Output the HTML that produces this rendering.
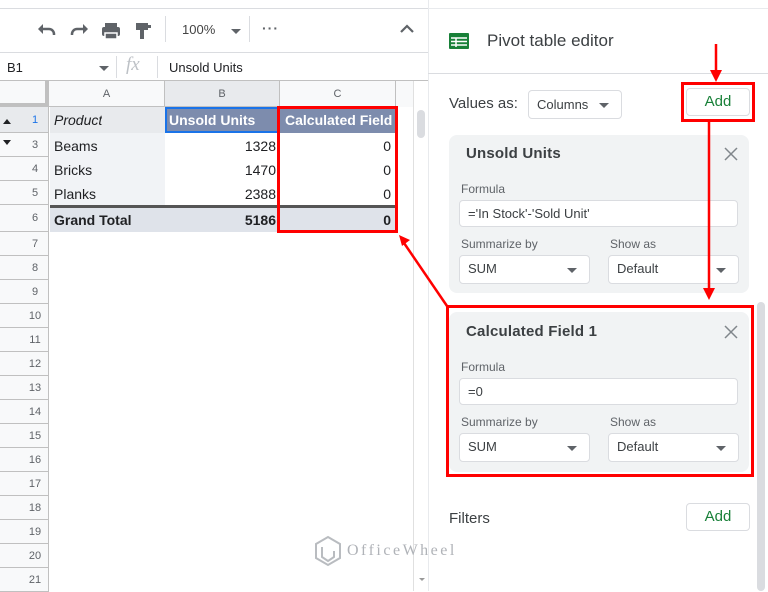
<!DOCTYPE html>
<html><head><meta charset="utf-8"><style>
*{box-sizing:border-box;margin:0;padding:0}
body{width:768px;height:591px;overflow:hidden;background:#fff;font-family:"Liberation Sans",Arial,sans-serif;position:relative;color:#202124}
.a{position:absolute}
.rh{position:absolute;left:0;width:49px;background:#f8f9fa;border-bottom:1px solid #c0c0c0;border-right:1px solid #c0c0c0;text-align:center;font-size:11px;color:#5f6368;padding-left:22px}
.cell{position:absolute;font-size:14px;line-height:24px;white-space:nowrap;overflow:hidden}
.card{position:absolute;background:#f1f3f4;border-radius:8px}
.lbl{position:absolute;font-size:12px;color:#5f6368}
.inp{position:absolute;background:#fff;border:1px solid #dadce0;border-radius:4px;font-size:13px;color:#3c4043;padding-left:8px;line-height:26px}
.dd::after{content:"";position:absolute;right:12px;top:12px;border-left:5px solid transparent;border-right:5px solid transparent;border-top:5px solid #5f6368}
.btn{position:absolute;border:1px solid #dadce0;border-radius:4px;background:#fff;color:#188038;font-size:15px;text-align:center}
.ttl{position:absolute;font-size:15px;color:#3c4043;font-weight:bold;letter-spacing:0.2px}
</style></head><body>
<div class="a" style="left:0;top:8px;width:428px;height:1px;background:#dadce0"></div>
<svg class="a" style="left:36px;top:20px" width="130" height="22" viewBox="0 0 130 22">
<path d="M4 9h9a5 5 0 0 1 5 5v1" fill="none" stroke="#5f6368" stroke-width="2.5"/><path d="M2 9l5-5v10z" fill="#5f6368"/>
<path d="M50 9h-9a5 5 0 0 0-5 5v1" fill="none" stroke="#5f6368" stroke-width="2.5"/><path d="M52 9l-5-5v10z" fill="#5f6368"/>
<rect x="66" y="7" width="18" height="9" rx="2" fill="#5f6368"/><rect x="69" y="3" width="12" height="4" fill="#5f6368"/><rect x="69" y="13" width="12" height="6" fill="#5f6368" stroke="#fff" stroke-width="1.5"/>
<rect x="100" y="3" width="12" height="7" fill="#5f6368"/><rect x="112" y="5" width="3" height="3" fill="#5f6368"/><rect x="104" y="10" width="4" height="9" fill="#5f6368"/>
</svg>
<div class="a" style="left:165px;top:16px;width:1px;height:26px;background:#dadce0"></div>
<div class="a" style="left:182px;top:22px;font-size:13px;color:#444">100%</div>
<div class="a" style="left:231px;top:29px;border-left:5px solid transparent;border-right:5px solid transparent;border-top:5px solid #5f6368"></div>
<div class="a" style="left:249px;top:16px;width:1px;height:26px;background:#dadce0"></div>
<div class="a" style="left:262px;top:20px;font-size:14px;color:#5f6368;letter-spacing:1px;font-weight:bold">···</div>
<svg class="a" style="left:399px;top:24px" width="16" height="10"><path d="M2 8l6-6 6 6" fill="none" stroke="#5f6368" stroke-width="2.2"/></svg>
<div class="a" style="left:0;top:52px;width:428px;height:1px;background:#dadce0"></div>
<div class="a" style="left:7px;top:60px;font-size:13px">B1</div>
<div class="a" style="left:99px;top:66px;border-left:5px solid transparent;border-right:5px solid transparent;border-top:5px solid #5f6368"></div>
<div class="a" style="left:116px;top:56px;width:1px;height:22px;background:#dadce0"></div>
<div class="a" style="left:126px;top:54px;font-size:19px;color:#bdc1c6;font-style:italic;font-family:'Liberation Serif',serif">fx</div>
<div class="a" style="left:157px;top:56px;width:1px;height:22px;background:#dadce0"></div>
<div class="a" style="left:169px;top:60px;font-size:13px">Unsold Units</div>
<div class="a" style="left:0;top:80px;width:428px;height:1px;background:#c0c0c0"></div>
<div class="a" style="left:0;top:81px;width:49px;height:26px;background:#f8f9fa;border-right:4px solid #c0c0c0;border-bottom:4px solid #c0c0c0"></div>
<div class="a" style="left:49px;top:81px;width:116px;height:26px;background:#f8f9fa;border-right:1px solid #c0c0c0;font-size:11px;color:#5f6368;text-align:center;line-height:26px">A</div>
<div class="a" style="left:165px;top:81px;width:115px;height:26px;background:#e8eaed;border-right:1px solid #c0c0c0;font-size:11px;color:#5f6368;text-align:center;line-height:26px">B</div>
<div class="a" style="left:280px;top:81px;width:116px;height:26px;background:#f8f9fa;border-right:1px solid #c0c0c0;font-size:11px;color:#5f6368;text-align:center;line-height:26px">C</div>
<div class="a" style="left:396px;top:81px;width:17px;height:26px;background:#f8f9fa"></div>
<div class="a" style="left:49px;top:106px;width:347px;height:1px;background:#c0c0c0"></div>
<div class="rh" style="top:107px;height:26px;line-height:26px;background:#e8eaed;color:#1a73e8">1</div>
<div class="a" style="left:3px;top:119px;border-left:4px solid transparent;border-right:4px solid transparent;border-bottom:5px solid #202124"></div>
<div class="rh" style="top:133px;height:24px;line-height:24px">3</div>
<div class="a" style="left:3px;top:140px;border-left:4px solid transparent;border-right:4px solid transparent;border-top:5px solid #202124"></div>
<div class="rh" style="top:157px;height:24px;line-height:24px">4</div>
<div class="rh" style="top:181px;height:24px;line-height:24px">5</div>
<div class="rh" style="top:205px;height:27px;line-height:27px">6</div>
<div class="rh" style="top:232px;height:24px;line-height:24px">7</div>
<div class="rh" style="top:256px;height:24px;line-height:24px">8</div>
<div class="rh" style="top:280px;height:24px;line-height:24px">9</div>
<div class="rh" style="top:304px;height:24px;line-height:24px">10</div>
<div class="rh" style="top:328px;height:24px;line-height:24px">11</div>
<div class="rh" style="top:352px;height:24px;line-height:24px">12</div>
<div class="rh" style="top:376px;height:24px;line-height:24px">13</div>
<div class="rh" style="top:400px;height:24px;line-height:24px">14</div>
<div class="rh" style="top:424px;height:24px;line-height:24px">15</div>
<div class="rh" style="top:448px;height:24px;line-height:24px">16</div>
<div class="rh" style="top:472px;height:24px;line-height:24px">17</div>
<div class="rh" style="top:496px;height:24px;line-height:24px">18</div>
<div class="rh" style="top:520px;height:24px;line-height:24px">19</div>
<div class="rh" style="top:544px;height:24px;line-height:24px">20</div>
<div class="rh" style="top:568px;height:24px;line-height:24px">21</div>
<div class="a" style="left:50px;top:107px;width:115px;height:26px;background:#e8eaed"></div>
<div class="cell" style="left:54px;top:107px;font-style:italic;line-height:26px">Product</div>
<div class="a" style="left:165px;top:107px;width:231px;height:26px;background:#7d8cad"></div>
<div class="a" style="left:165px;top:107px;width:115px;height:26px;border:2px solid #1a73e8"></div>
<div class="cell" style="left:169px;top:107px;color:#fff;font-weight:bold;line-height:26px">Unsold Units</div>
<div class="cell" style="left:285px;top:107px;color:#fff;font-weight:bold;width:110px;line-height:26px">Calculated Field</div>
<div class="a" style="left:50px;top:133px;width:115px;height:72px;background:#f1f3f6"></div>
<div class="cell" style="left:54px;top:134px">Beams</div>
<div class="cell" style="left:54px;top:158px">Bricks</div>
<div class="cell" style="left:54px;top:182px">Planks</div>
<div class="cell" style="left:165px;top:134px;width:111px;text-align:right">1328</div>
<div class="cell" style="left:165px;top:158px;width:111px;text-align:right">1470</div>
<div class="cell" style="left:165px;top:182px;width:111px;text-align:right">2388</div>
<div class="cell" style="left:280px;top:134px;width:111px;text-align:right">0</div>
<div class="cell" style="left:280px;top:158px;width:111px;text-align:right">0</div>
<div class="cell" style="left:280px;top:182px;width:111px;text-align:right">0</div>
<div class="a" style="left:50px;top:205px;width:346px;height:3px;background:#555"></div>
<div class="a" style="left:50px;top:208px;width:346px;height:24px;background:#dfe3ea"></div>
<div class="cell" style="left:54px;top:208px;font-weight:bold">Grand Total</div>
<div class="cell" style="left:165px;top:208px;width:111px;text-align:right;font-weight:bold">5186</div>
<div class="cell" style="left:280px;top:208px;width:111px;text-align:right;font-weight:bold">0</div>
<div class="a" style="left:413px;top:81px;width:1px;height:510px;background:#e0e0e0"></div>
<div class="a" style="left:417px;top:110px;width:8px;height:28px;background:#dadce0;border-radius:4px"></div>
<div class="a" style="left:419px;top:578px;border-left:3px solid transparent;border-right:3px solid transparent;border-top:3px solid #999"></div>
<!-- side panel -->
<div class="a" style="left:428px;top:0;width:340px;height:591px;background:#fff;border-left:1px solid #e8eaed"></div>
<div class="a" style="left:428px;top:8px;width:340px;height:1px;background:#e8eaed"></div>
<svg class="a" style="left:449px;top:33px" width="20" height="16"><rect width="20" height="16" rx="1" fill="#188038"/><path d="M2 5h16M2 8.5h16M2 12h16M7 5v9" stroke="#fff" stroke-width="1.5"/></svg>
<div class="a" style="left:487px;top:31px;font-size:17px;color:#3c4043">Pivot table editor</div>
<div class="a" style="left:428px;top:73px;width:340px;height:1px;background:#dadce0"></div>
<div class="a" style="left:449px;top:95px;font-size:15px;color:#3c4043">Values as:</div>
<div class="inp dd" style="left:528px;top:90px;width:94px;height:29px;line-height:27px;font-size:13px">Columns</div>
<div class="btn" style="left:686px;top:88px;width:64px;height:28px;line-height:26px">Add</div>
<div class="card" style="left:449px;top:135px;width:300px;height:158px"></div>
<div class="ttl" style="left:466px;top:145px">Unsold Units</div>
<svg class="a" style="left:724px;top:147px" width="14" height="14"><path d="M1 1l12 12M13 1L1 13" stroke="#80868b" stroke-width="1.5"/></svg>
<div class="lbl" style="left:461px;top:182px">Formula</div>
<div class="inp" style="left:459px;top:200px;width:279px;height:27px">='In Stock'-'Sold Unit'</div>
<div class="lbl" style="left:461px;top:237px">Summarize by</div>
<div class="lbl" style="left:610px;top:237px">Show as</div>
<div class="inp dd" style="left:459px;top:255px;width:131px;height:29px">SUM</div>
<div class="inp dd" style="left:608px;top:255px;width:131px;height:29px">Default</div>
<div class="card" style="left:449px;top:312px;width:300px;height:160px"></div>
<div class="ttl" style="left:466px;top:323px">Calculated Field 1</div>
<svg class="a" style="left:724px;top:325px" width="14" height="14"><path d="M1 1l12 12M13 1L1 13" stroke="#80868b" stroke-width="1.5"/></svg>
<div class="lbl" style="left:461px;top:360px">Formula</div>
<div class="inp" style="left:459px;top:378px;width:279px;height:27px">=0</div>
<div class="lbl" style="left:461px;top:415px">Summarize by</div>
<div class="lbl" style="left:610px;top:415px">Show as</div>
<div class="inp dd" style="left:459px;top:433px;width:131px;height:29px">SUM</div>
<div class="inp dd" style="left:608px;top:433px;width:131px;height:29px">Default</div>
<div class="a" style="left:449px;top:510px;font-size:15px;color:#3c4043">Filters</div>
<div class="btn" style="left:686px;top:503px;width:64px;height:28px;line-height:26px">Add</div>
<div class="a" style="left:757px;top:302px;width:8px;height:289px;background:#dadce0;border-radius:4px"></div>
<!-- watermark overlay -->
<svg class="a" style="left:313px;top:535px" width="30" height="34" viewBox="0 0 30 34"><path d="M15 2l12 7v14l-12 7-12-7V9z M9 12v10l6 4 6-4v-6" fill="none" stroke="#b9bcc0" stroke-width="2"/></svg>
<div class="a" style="left:347px;top:542px;font-family:'Liberation Serif',serif;font-size:16px;letter-spacing:2.5px;color:#b0b3b8">OfficeWheel</div>
<div class="a" style="left:277px;top:106px;width:121px;height:127px;border:3px solid #f00"></div>
<div class="a" style="left:681px;top:82px;width:74px;height:40px;border:3px solid #f00"></div>
<div class="a" style="left:446px;top:305px;width:308px;height:172px;border:3px solid #f00"></div>
<svg class="a" style="left:0;top:0" width="768" height="591">
<line x1="716" y1="44" x2="716" y2="72" stroke="#f00" stroke-width="2.5"/><path d="M710 70h12l-6 12z" fill="#f00"/>
<line x1="709" y1="122" x2="709" y2="290" stroke="#f00" stroke-width="2.5"/><path d="M703 288h12l-6 12z" fill="#f00"/>
<line x1="447" y1="306" x2="404" y2="243" stroke="#f00" stroke-width="2.5"/><path d="M399 235l11 5-8 6z" fill="#f00"/>
</svg>
</body></html>
